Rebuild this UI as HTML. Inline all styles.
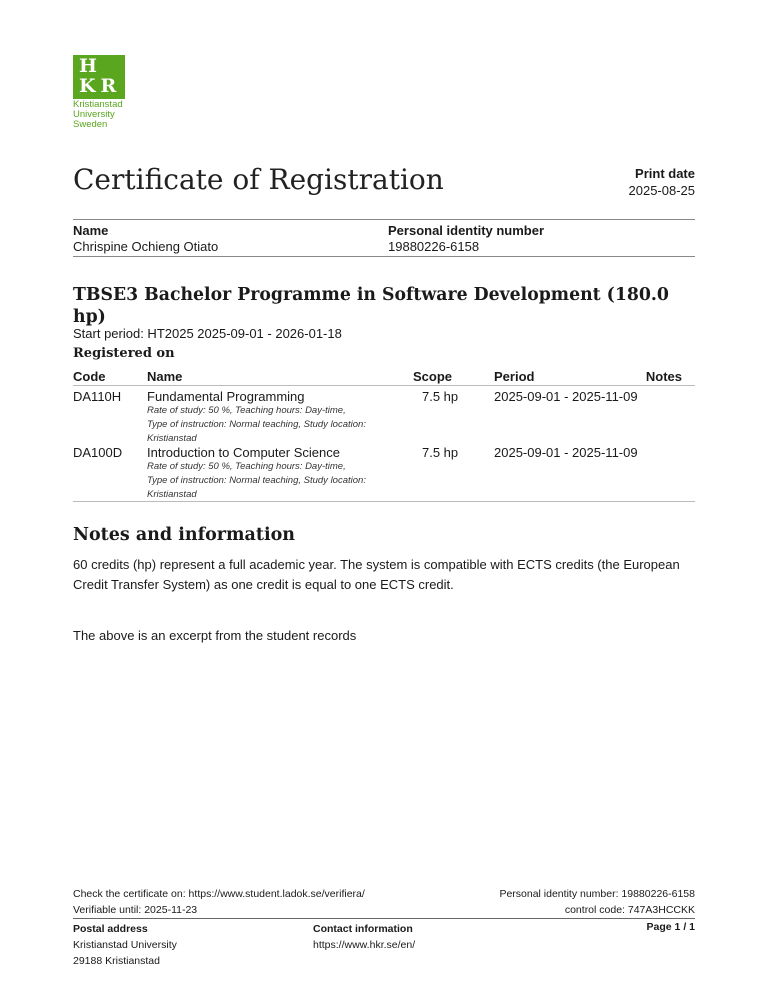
<!DOCTYPE html>
<html><head><meta charset="utf-8"><style>
*{margin:0;padding:0;box-sizing:border-box}
body{width:768px;height:994px;background:#fff;color:#1a1a1a;font-family:"Liberation Sans",Arial,sans-serif;position:relative;overflow:hidden}
.a{position:absolute;white-space:nowrap}
.s{font-size:13px}
.b{font-weight:bold}
.i{font-style:italic;font-size:9.5px;color:#333}
.serif{font-family:"DejaVu Serif","Liberation Serif",serif}
.line{position:absolute;left:73px;width:622px;height:1px;background:#888}
.f{font-size:10.5px}
</style></head><body>
<div class="a" style="left:73px;top:55px;width:52px;height:44px;background:#5aa61e"></div>
<div class="a b serif" style="left:79px;top:56px;color:#fff;font-size:19px;line-height:20px;letter-spacing:5px">H<br>KR</div>
<div class="a" style="left:73px;top:100px;color:#5aa61e;font-size:9.5px;line-height:10px">Kristianstad<br>University<br>Sweden</div>

<div class="a serif" style="left:73px;top:163px;font-size:28px;font-weight:300;color:#222">Certificate of Registration</div>
<div class="a b s" style="right:73px;top:166px">Print date</div>
<div class="a s" style="right:73px;top:183px">2025-08-25</div>

<div class="line" style="top:219px"></div>
<div class="a b s" style="left:73px;top:223px">Name</div>
<div class="a s" style="left:73px;top:239px">Chrispine Ochieng Otiato</div>
<div class="a b s" style="left:388px;top:223px">Personal identity number</div>
<div class="a s" style="left:388px;top:239px">19880226-6158</div>
<div class="line" style="top:256px"></div>

<div class="a b serif" style="left:73px;top:284px;font-size:17.3px;line-height:22px">TBSE3 Bachelor Programme in Software Development (180.0<br>hp)</div>
<div class="a s" style="left:73px;top:326px">Start period: HT2025 2025-09-01 - 2026-01-18</div>
<div class="a b serif" style="left:73px;top:346px;font-size:13px">Registered on</div>

<div class="a b s" style="left:73px;top:369px">Code</div>
<div class="a b s" style="left:147px;top:369px">Name</div>
<div class="a b s" style="left:413px;top:369px">Scope</div>
<div class="a b s" style="left:494px;top:369px">Period</div>
<div class="a b s" style="right:86px;top:369px">Notes</div>
<div class="a" style="left:73px;top:385px;width:622px;height:1px;background:#bbb"></div>

<div class="a s" style="left:73px;top:389px">DA110H</div>
<div class="a s" style="left:147px;top:389px">Fundamental Programming</div>
<div class="a i" style="left:147px;top:404px;line-height:14px">Rate of study: 50 %, Teaching hours: Day-time,<br>Type of instruction: Normal teaching, Study location:<br>Kristianstad</div>
<div class="a s" style="left:422px;top:389px">7.5 hp</div>
<div class="a s" style="left:494px;top:389px">2025-09-01 - 2025-11-09</div>

<div class="a s" style="left:73px;top:445px">DA100D</div>
<div class="a s" style="left:147px;top:445px">Introduction to Computer Science</div>
<div class="a i" style="left:147px;top:460px;line-height:14px">Rate of study: 50 %, Teaching hours: Day-time,<br>Type of instruction: Normal teaching, Study location:<br>Kristianstad</div>
<div class="a s" style="left:422px;top:445px">7.5 hp</div>
<div class="a s" style="left:494px;top:445px">2025-09-01 - 2025-11-09</div>
<div class="a" style="left:73px;top:501px;width:622px;height:1px;background:#bbb"></div>

<div class="a b serif" style="left:73px;top:525px;font-size:17.5px">Notes and information</div>
<div class="a s" style="left:73px;top:555px;line-height:20px">60 credits (hp) represent a full academic year. The system is compatible with ECTS credits (the European<br>Credit Transfer System) as one credit is equal to one ECTS credit.</div>
<div class="a s" style="left:73px;top:628px">The above is an excerpt from the student records</div>

<div class="a f" style="left:73px;top:886px;line-height:16px">Check the certificate on: https://www.student.ladok.se/verifiera/<br>Verifiable until: 2025-11-23</div>
<div class="a f" style="right:73px;top:886px;line-height:16px;text-align:right">Personal identity number: 19880226-6158<br>control code: 747A3HCCKK</div>
<div class="line" style="top:918px;background:#666"></div>
<div class="a f" style="left:73px;top:921px;line-height:16px"><b>Postal address</b><br>Kristianstad University<br>29188 Kristianstad</div>
<div class="a f" style="left:313px;top:921px;line-height:16px"><b>Contact information</b><br>https://www.hkr.se/en/</div>
<div class="a f b" style="right:73px;top:921px">Page 1 / 1</div>
</body></html>
